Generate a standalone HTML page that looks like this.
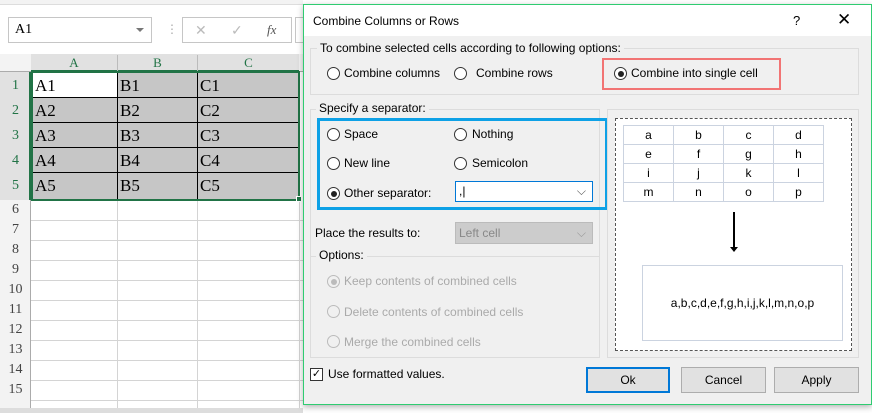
<!DOCTYPE html>
<html><head><style>
*{margin:0;padding:0;box-sizing:border-box}
body{width:872px;height:413px;overflow:hidden;background:#fff;position:relative;font-family:"Liberation Sans",sans-serif}
.a{position:absolute}
.ser{font-family:"Liberation Serif",serif}
.d{font-family:"Liberation Sans",sans-serif;font-size:12px;color:#000}
.r{position:absolute;width:13px;height:13px;border:1px solid #333;border-radius:50%;background:#fff}
.r.on::after{content:"";position:absolute;left:2.5px;top:2.5px;width:6px;height:6px;border-radius:50%;background:#222}
.g{border-color:#bbb;background:#f0f0f0}
.g.on::after{background:#bbb}
.grp{position:absolute;border:1px solid #dcdcdc}
.leg{position:absolute;background:#f0f0f0;padding:0 3px}
.btn{position:absolute;height:26px;border:1px solid #adadad;background:#e1e1e1;text-align:center;line-height:24px;font-size:12px}
td{border:1px solid #cbd3e0;width:50px;height:19px;padding:0}
</style></head><body>
<div class="a" style="left:0;top:0;width:303px;height:5px;background:#f3f3f3;border-bottom:1px solid #ddd"></div>
<div class="a ser" style="left:8px;top:17px;width:144px;height:26px;border:1px solid #c6c6c6;font-size:14px;line-height:24px;padding-left:6px">A1<span class="a" style="right:7px;top:10px;border-left:4px solid transparent;border-right:4px solid transparent;border-top:4px solid #777"></span></div>
<div class="a" style="left:166px;top:22px;color:#aaa;font-size:12px">⋮</div>
<div class="a" style="left:182px;top:17px;width:110px;height:26px;border:1px solid #c6c6c6;color:#bbb;font-size:14px;line-height:24px"><span class="a" style="left:12px">✕</span><span class="a" style="left:48px">✓</span><span class="a ser" style="left:84px;color:#555;font-style:italic;font-size:13px">fx</span></div>
<div class="a" style="left:295px;top:17px;width:8px;height:26px;border:1px solid #c6c6c6;border-right:none"></div>
<div class="a" style="left:0;top:54px;width:303px;height:18px;background:#f3f3f3;border-bottom:1px solid #ababab"></div>
<div class="a" style="left:31px;top:54px;width:268px;height:18px;background:#e1e1e1;border-bottom:2px solid #217346"></div>
<div class="a ser" style="left:31px;top:55px;width:86px;text-align:center;font-size:13px;color:#217346">A</div>
<div class="a ser" style="left:117px;top:55px;width:80px;text-align:center;font-size:13px;color:#217346;border-left:1px solid #bbb">B</div>
<div class="a ser" style="left:197px;top:55px;width:102px;text-align:center;font-size:13px;color:#217346;border-left:1px solid #bbb">C</div>
<div class="a" style="left:0;top:72px;width:31px;height:341px;background:#f3f3f3;border-right:1px solid #ababab"></div>
<div class="a" style="left:0;top:72px;width:31px;height:128px;background:#e1e1e1;border-right:2px solid #217346"></div>
<svg class="a" style="left:0;top:72px" width="303" height="341">
<g stroke="#d4d4d4" stroke-width="1">
<line x1="31" y1="148.5" x2="303" y2="148.5"/><line x1="31" y1="168.5" x2="303" y2="168.5"/><line x1="31" y1="188.5" x2="303" y2="188.5"/><line x1="31" y1="208.5" x2="303" y2="208.5"/><line x1="31" y1="228.5" x2="303" y2="228.5"/><line x1="31" y1="248.5" x2="303" y2="248.5"/><line x1="31" y1="268.5" x2="303" y2="268.5"/><line x1="31" y1="288.5" x2="303" y2="288.5"/><line x1="31" y1="308.5" x2="303" y2="308.5"/><line x1="31" y1="328.5" x2="303" y2="328.5"/>
<line x1="117.5" y1="128" x2="117.5" y2="341"/><line x1="197.5" y1="128" x2="197.5" y2="341"/><line x1="299.5" y1="128" x2="299.5" y2="341"/>
</g></svg>
<div class="a" style="left:31px;top:71px;width:269px;height:130px;background:#c6c6c6;border:2px solid #217346"></div>
<div class="a" style="left:33px;top:73px;width:84px;height:24px;background:#fff"></div>
<svg class="a" style="left:33px;top:73px" width="265" height="126"><g stroke="#000" stroke-width="1"><line x1="84.5" y1="0" x2="84.5" y2="126"/><line x1="164.5" y1="0" x2="164.5" y2="126"/><line x1="0" y1="24.5" x2="265" y2="24.5"/><line x1="0" y1="49.5" x2="265" y2="49.5"/><line x1="0" y1="74.5" x2="265" y2="74.5"/><line x1="0" y1="99.5" x2="265" y2="99.5"/></g></svg>
<div class="a" style="left:296px;top:196px;width:6px;height:6px;background:#217346;border:1px solid #fff"></div>
<div class="a ser" style="left:0;top:73px;width:31px;font-size:14px;color:#217346;text-align:center;line-height:25px">1<br>2<br>3<br>4<br>5</div>
<div class="a ser" style="left:0;top:200px;width:31px;font-size:14px;color:#444;text-align:center;line-height:20px">6<br>7<br>8<br>9<br>10<br>11<br>12<br>13<br>14<br>15</div>
<div class="a ser" style="left:35px;top:73px;font-size:17px;line-height:25px">A1<br>A2<br>A3<br>A4<br>A5</div>
<div class="a ser" style="left:120px;top:73px;font-size:17px;line-height:25px">B1<br>B2<br>B3<br>B4<br>B5</div>
<div class="a ser" style="left:200px;top:73px;font-size:17px;line-height:25px">C1<br>C2<br>C3<br>C4<br>C5</div>
<div class="a" style="left:0;top:408px;width:303px;height:5px;background:#ddd"></div>
<div class="a d" style="left:303px;top:4px;width:569px;height:401px;background:#f0f0f0;border:1px solid #2fcc71;box-shadow:0 2px 6px rgba(0,0,0,.3)">
<div class="a" style="left:0;top:0;width:567px;height:31px;background:#fff"></div>
<div class="a" style="left:9px;top:9px">Combine Columns or Rows</div>
<div class="a" style="left:489px;top:8px;font-size:13px">?</div>
<div class="a" style="left:533px;top:5px;font-size:17px">✕</div>
<div class="grp" style="left:6px;top:43px;width:549px;height:47px"></div>
<div class="leg" style="left:13px;top:36px">To combine selected cells according to following options:</div>
<div class="r" style="left:23px;top:62px"></div><div class="a" style="left:40px;top:61px">Combine columns</div>
<div class="r" style="left:150px;top:62px"></div><div class="a" style="left:172px;top:61px">Combine rows</div>
<div class="a" style="left:298px;top:53px;width:179px;height:32px;border:2px solid #f27474"></div>
<div class="r on" style="left:310px;top:62px"></div><div class="a" style="left:327px;top:61px">Combine into single cell</div>
<div class="grp" style="left:6px;top:104px;width:290px;height:249px"></div>
<div class="leg" style="left:12px;top:96px">Specify a separator:</div>
<div class="a" style="left:13px;top:113px;width:291px;height:92px;border:3px solid #0ea1e6"></div>
<div class="r" style="left:23px;top:123px"></div><div class="a" style="left:40px;top:122px">Space</div>
<div class="r" style="left:150px;top:123px"></div><div class="a" style="left:168px;top:122px">Nothing</div>
<div class="r" style="left:23px;top:152px"></div><div class="a" style="left:40px;top:151px">New line</div>
<div class="r" style="left:150px;top:152px"></div><div class="a" style="left:168px;top:151px">Semicolon</div>
<div class="r on" style="left:23px;top:182px"></div><div class="a" style="left:40px;top:181px">Other separator:</div>
<div class="a" style="left:151px;top:176px;width:138px;height:21px;background:#fff;border:1px solid #0078d7;padding-left:3px;line-height:19px">,|<span class="a" style="right:6px;top:0;color:#555">⌵</span></div>
<div class="a" style="left:11px;top:221px">Place the results to:</div>
<div class="a" style="left:151px;top:217px;width:138px;height:22px;background:#ccc;border:1px solid #bbb;color:#888;padding-left:3px;line-height:20px">Left cell<span class="a" style="right:6px;top:0;color:#999">⌵</span></div>
<div class="grp" style="left:6px;top:251px;width:290px;height:102px"></div>
<div class="leg" style="left:12px;top:243px">Options:</div>
<div class="r g on" style="left:23px;top:270px"></div><div class="a" style="left:40px;top:269px;color:#aaa">Keep contents of combined cells</div>
<div class="r g" style="left:23px;top:300px"></div><div class="a" style="left:40px;top:300px;color:#aaa">Delete contents of combined cells</div>
<div class="r g" style="left:23px;top:330px"></div><div class="a" style="left:40px;top:330px;color:#aaa">Merge the combined cells</div>
<div class="grp" style="left:303px;top:104px;width:252px;height:249px"></div>
<div class="a" style="left:311px;top:113px;width:237px;height:233px;background:#fff;border:1px dashed #555"></div>
<table class="a" style="left:319px;top:120px;border-collapse:collapse;font-size:12px;text-align:center">
<tr><td>a</td><td>b</td><td>c</td><td>d</td></tr><tr><td>e</td><td>f</td><td>g</td><td>h</td></tr><tr><td>i</td><td>j</td><td>k</td><td>l</td></tr><tr><td>m</td><td>n</td><td>o</td><td>p</td></tr></table>
<div class="a" style="left:429px;top:207px;width:2px;height:37px;background:#000"></div>
<div class="a" style="left:426px;top:242px;border-left:4px solid transparent;border-right:4px solid transparent;border-top:5px solid #000"></div>
<div class="a" style="left:338px;top:260px;width:201px;height:76px;border:1px solid #cbd3e0;background:#fff;text-align:center;line-height:74px">a,b,c,d,e,f,g,h,i,j,k,l,m,n,o,p</div>
<div class="a" style="left:6px;top:363px;width:13px;height:13px;border:1px solid #333;background:#fff;font-size:11px;line-height:11px;text-align:center">✓</div>
<div class="a" style="left:24px;top:362px">Use formatted values.</div>
<div class="btn" style="left:282px;top:362px;width:84px;border:2px solid #0078d7;line-height:22px">Ok</div>
<div class="btn" style="left:377px;top:362px;width:85px">Cancel</div>
<div class="btn" style="left:470px;top:362px;width:85px">Apply</div>
</div>
</body></html>
